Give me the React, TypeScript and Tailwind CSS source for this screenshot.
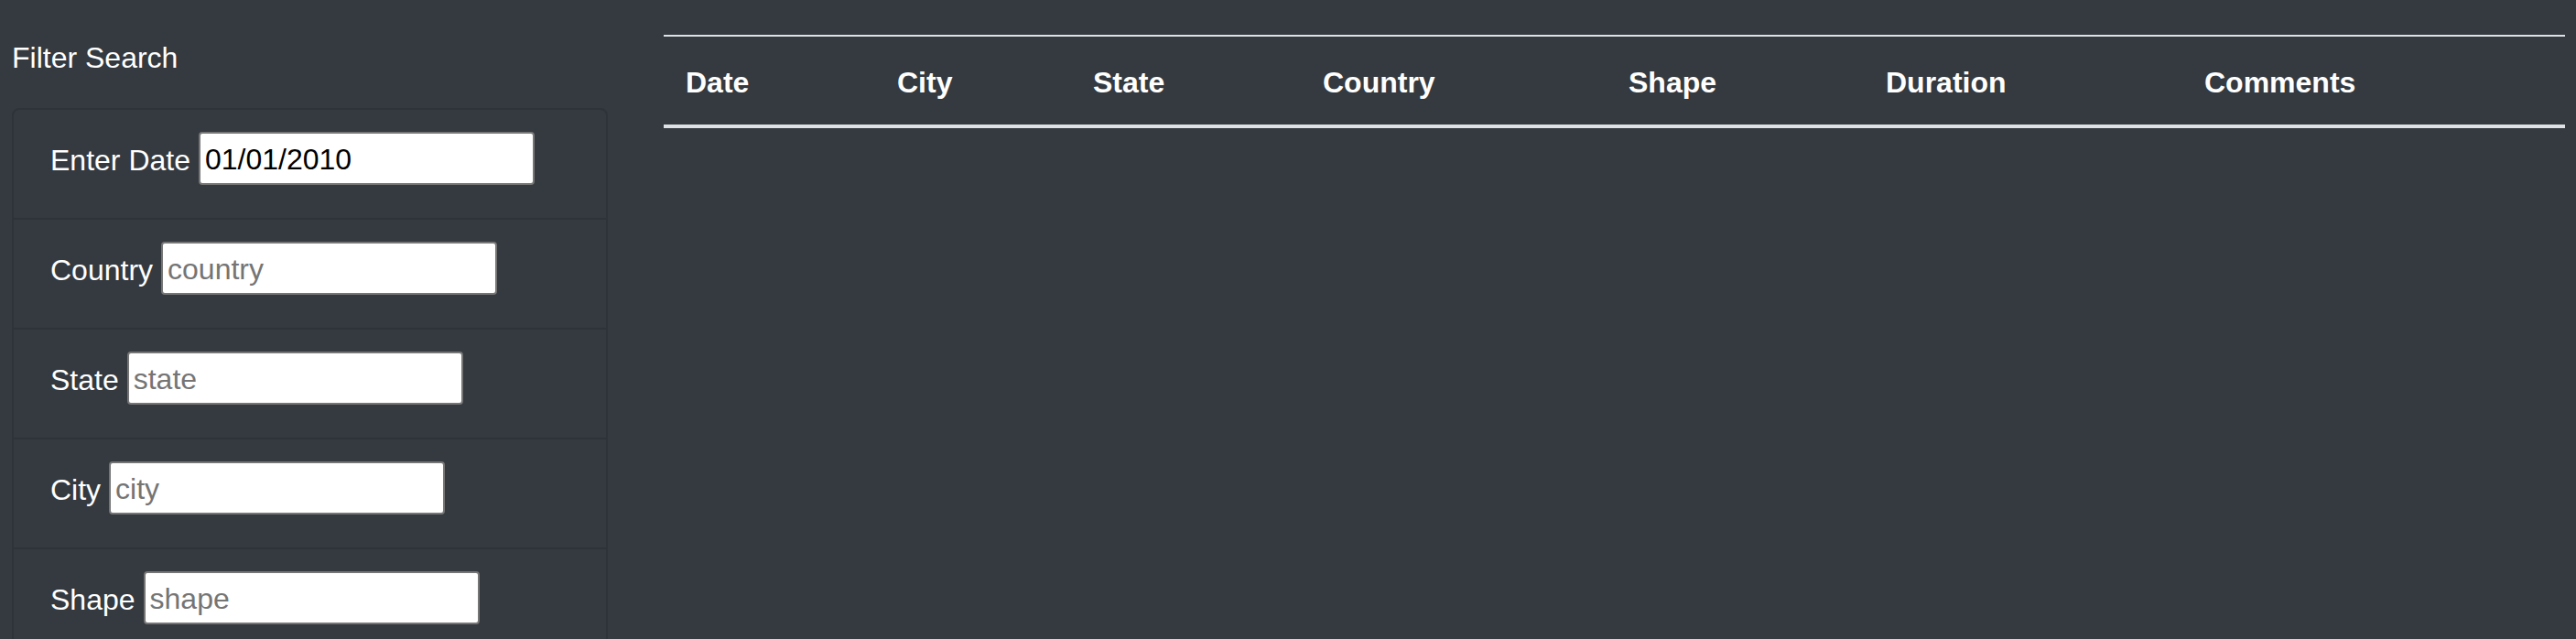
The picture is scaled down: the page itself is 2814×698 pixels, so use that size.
const FILTERS = [
  { label: 'Enter Date', placeholder: '', value: '01/01/2010' },
  { label: 'Country', placeholder: 'country', value: '' },
  { label: 'State', placeholder: 'state', value: '' },
  { label: 'City', placeholder: 'city', value: '' },
  { label: 'Shape', placeholder: 'shape', value: '' },
];

const COLUMNS = [
  { name: 'Date', width: 'w-[231px]' },
  { name: 'City', width: 'w-[214px]' },
  { name: 'State', width: 'w-[251px]' },
  { name: 'Country', width: 'w-[334px]' },
  { name: 'Shape', width: 'w-[281px]' },
  { name: 'Duration', width: 'w-[348px]' },
  { name: 'Comments', width: 'w-[418px]' },
];

export default function App() {
  return (
    <div
      className="min-h-screen bg-[#343a40] text-white flex items-start gap-[61px] pt-[38px] pl-[13px] pr-[12px] overflow-hidden"
      style={{ fontFamily: '"Liberation Sans", Arial, sans-serif' }}
    >
      {/* Filter sidebar */}
      <aside className="w-[651px] shrink-0">
        <h5 className="text-[32px] leading-[48px] pt-px mb-[31px]">Filter Search</h5>
        <ul className="border-2 border-[#2e3339] rounded-[8px]">
          {FILTERS.map((f, i) => (
            <li
              key={f.label}
              className={`pt-[24px] pb-[36px] pl-[40px] pr-[40px] ${i > 0 ? 'border-t-2 border-[#2e3339]' : ''}`}
            >
              <div className="flex items-center gap-[9px] h-[58px]">
                <label className="text-[32px] leading-[48px] pt-[3px] text-white">{f.label}</label>
                <input
                  type="text"
                  defaultValue={f.value}
                  placeholder={f.placeholder}
                  className="w-[367px] h-[58px] bg-white border-2 border-[#767676] rounded-[4px] px-[5px] pt-[3px] text-[32px] text-black placeholder:text-[#757575] outline-none"
                  style={{ fontFamily: '"Liberation Sans", Arial, sans-serif' }}
                />
              </div>
            </li>
          ))}
        </ul>
      </aside>

      {/* Results table */}
      <table className="w-[2077px] shrink-0 border-collapse">
        <thead>
          <tr>
            {COLUMNS.map((c) => (
              <th
                key={c.name}
                className={`${c.width} text-left font-bold text-[32px] leading-[48px] px-[24px] pt-[26px] pb-[22px] border-t-2 border-b-4 border-[#dee2e6] text-white`}
              >
                {c.name}
              </th>
            ))}
          </tr>
        </thead>
        <tbody />
      </table>
    </div>
  );
}
